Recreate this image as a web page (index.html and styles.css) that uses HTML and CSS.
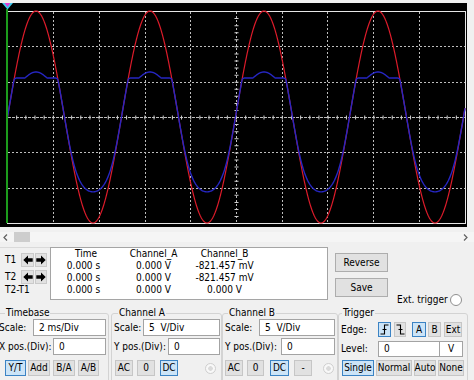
FILE: index.html
```html
<!DOCTYPE html>
<html>
<head>
<meta charset="utf-8">
<link rel="stylesheet" href="styles.css">
</head>
<body>
<div class="app">
  <svg class="scope" width="474" height="227" viewBox="0 0 474 227">
    <rect x="0" y="3" width="467" height="224" fill="#000"/>
    <g stroke="#bdbdbd" stroke-width="1" stroke-dasharray="2 2" fill="none">
      <line x1="53.5" y1="12" x2="53.5" y2="223"/>
      <line x1="99.5" y1="12" x2="99.5" y2="223"/>
      <line x1="145.5" y1="12" x2="145.5" y2="223"/>
      <line x1="190.5" y1="12" x2="190.5" y2="223"/>
      <line x1="282.5" y1="12" x2="282.5" y2="223"/>
      <line x1="327.5" y1="12" x2="327.5" y2="223"/>
      <line x1="373.5" y1="12" x2="373.5" y2="223"/>
      <line x1="419.5" y1="12" x2="419.5" y2="223"/>
      <line x1="8" y1="46.5" x2="465" y2="46.5"/>
      <line x1="8" y1="82.5" x2="465" y2="82.5"/>
      <line x1="8" y1="152.5" x2="465" y2="152.5"/>
      <line x1="8" y1="188.5" x2="465" y2="188.5"/>
      <line x1="236.5" y1="12" x2="236.5" y2="223"/>
      <line x1="8" y1="117.5" x2="465" y2="117.5" stroke-dasharray="3 1"/>
    </g>
    <g stroke="#cfcfcf" stroke-width="1" fill="none">
      <line x1="7" y1="117.5" x2="465" y2="117.5" stroke-width="4" stroke-dasharray="1 8.16"/>
      <line x1="236.5" y1="11" x2="236.5" y2="223" stroke-width="4" stroke-dasharray="1 6.07"/>
    </g>
    <g stroke="#e6e6e6" stroke-width="1" fill="none">
      <line x1="7" y1="11.5" x2="466" y2="11.5"/>
      <line x1="7" y1="223.5" x2="466" y2="223.5"/>
      <line x1="465.5" y1="11" x2="465.5" y2="224"/>
    </g>
    <polyline id="red" fill="none" stroke="#dc1b2a" stroke-width="1.2" points=""/>
    <polyline id="blue" fill="none" stroke="#2626c2" stroke-width="1.4" points=""/>
    <rect x="6" y="9" width="2" height="214" fill="#1c9c1c"/>
    <polygon points="2,3 13,3 7.5,9.5" fill="#3ccbee"/>
    <polygon points="4.6,3 10.4,3 7.5,7" fill="#e040d8"/>
  </svg>

  <div class="hscroll">
    <div class="track">
      <svg class="chev" width="5" height="7" viewBox="0 0 5 7"><path d="M4 0.5 L1 3.5 L4 6.5" fill="none" stroke="#606060" stroke-width="1.2"/></svg>
      <div class="thumb"></div>
      <svg class="chev chev-r" width="5" height="7" viewBox="0 0 5 7"><path d="M1 0.5 L4 3.5 L1 6.5" fill="none" stroke="#606060" stroke-width="1.2"/></svg>
    </div>
  </div>

  <div class="readout">
    <div class="tpanel">
      <div class="trow">
        <span class="tlabel">T1</span>
        <div class="abtn"><svg width="10" height="10" viewBox="0 0 10 10"><path d="M0.3 5 L5 0.6 V3.3 H9.7 V6.7 H5 V9.4 Z" fill="#000"/></svg></div>
        <div class="abtn abtn2"><svg width="10" height="10" viewBox="0 0 10 10"><path d="M9.7 5 L5 0.6 V3.3 H0.3 V6.7 H5 V9.4 Z" fill="#000"/></svg></div>
      </div>
      <div class="trow">
        <span class="tlabel">T2</span>
        <div class="abtn"><svg width="10" height="10" viewBox="0 0 10 10"><path d="M0.3 5 L5 0.6 V3.3 H9.7 V6.7 H5 V9.4 Z" fill="#000"/></svg></div>
        <div class="abtn abtn2"><svg width="10" height="10" viewBox="0 0 10 10"><path d="M9.7 5 L5 0.6 V3.3 H0.3 V6.7 H5 V9.4 Z" fill="#000"/></svg></div>
      </div>
      <div class="t21">T2-T1</div>
    </div>
    <div class="table">
      <div class="tgrid">
        <span class="th-time">Time</span><span>Channel_A</span><span>Channel_B</span>
        <span>0.000 s</span><span>0.000 V</span><span>-821.457 mV</span>
        <span>0.000 s</span><span>0.000 V</span><span>-821.457 mV</span>
        <span>0.000 s</span><span>0.000 V</span><span>0.000 V</span>
      </div>
    </div>
    <div class="rbtns">
      <div class="pbtn">Reverse</div>
      <div class="pbtn">Save</div>
    </div>
    <div class="ext"><span>Ext. trigger</span><span class="radio"></span></div>
  </div>

  <div class="controls">
    <fieldset class="grp g-tb">
      <legend>Timebase</legend>
      <div class="frow"><span>Scale:</span><div class="inp w73">2 ms/Div</div></div>
      <div class="frow"><span>X pos.(Div):</span><div class="inp w53">0</div></div>
      <div class="brow">
        <div class="btn on tb1">Y/T</div>
        <div class="btn tb2">Add</div>
        <div class="btn tb3">B/A</div>
        <div class="btn tb4">A/B</div>
      </div>
    </fieldset>

    <fieldset class="grp g-ca">
      <legend>Channel A</legend>
      <div class="frow"><span>Scale:</span><div class="inp w77">5&nbsp; V/Div</div></div>
      <div class="frow"><span>Y pos.(Div):</span><div class="inp w52">0</div></div>
      <div class="brow">
        <div class="btn ca1">AC</div>
        <div class="btn ca2">0</div>
        <div class="btn on ca3">DC</div>
        <span class="dradio ca4"></span>
      </div>
    </fieldset>

    <fieldset class="grp g-cb">
      <legend>Channel B</legend>
      <div class="frow"><span>Scale:</span><div class="inp w76">5&nbsp; V/Div</div></div>
      <div class="frow"><span>Y pos.(Div):</span><div class="inp w54">0</div></div>
      <div class="brow">
        <div class="btn cb1">AC</div>
        <div class="btn cb2">0</div>
        <div class="btn on cb3">DC</div>
        <div class="btn cb4">-</div>
        <span class="dradio cb5"></span>
      </div>
    </fieldset>

    <fieldset class="grp g-tr">
      <legend>Trigger</legend>
      <div class="trg1">
        <span class="tlab">Edge:</span>
        <div class="btn on e1"><svg width="9" height="11" viewBox="0 0 9 11"><path d="M0.5 10 H4.5 V1 H8.5 M2.5 5.5 H6.5" fill="none" stroke="#000" stroke-width="1.1"/></svg></div>
        <div class="btn e2"><svg width="9" height="11" viewBox="0 0 9 11"><path d="M0.5 1 H4.5 V10 H8.5 M2.5 5.5 H6.5" fill="none" stroke="#000" stroke-width="1.1"/></svg></div>
        <div class="btn on e3">A</div>
        <div class="btn e4">B</div>
        <div class="btn e5">Ext</div>
      </div>
      <div class="trg2">
        <span class="tlab">Level:</span>
        <div class="inp w62">0</div>
        <div class="vbox">V</div>
      </div>
      <div class="trg3">
        <div class="btn on s1">Single</div>
        <div class="btn s2">Normal</div>
        <div class="btn s3">Auto</div>
        <div class="btn s4">None</div>
      </div>
    </fieldset>
  </div>
</div>
<script src="script.js"></script>
</body>
</html>
```

FILE: styles.css
```css
* { box-sizing: border-box; }
html, body { margin: 0; padding: 0; }
body {
  background: #f0f0f0;
  font-family: "DejaVu Sans Condensed", "DejaVu Sans", sans-serif;
  font-stretch: condensed;
  font-size: 10px;
  line-height: 12px;
  color: #000;
  width: 474px;
  height: 380px;
  overflow: hidden;
}
.app { width: 474px; height: 380px; overflow: hidden; }
.scope { display: block; }

/* horizontal scrollbar */
.hscroll { height: 20px; padding-top: 5px; }
.track {
  height: 10px;
  display: flex;
  align-items: center;
  padding-left: 3px;
  padding-right: 6px;
  background: #f5f5f5;
}
.thumb { width: 16px; height: 10px; margin-left: 6px; background: #cdcdcd; }
.chev { display: block; }
.chev-r { margin-left: auto; }

/* readout row */
.readout { display: flex; align-items: flex-start; height: 53px; }
.tpanel { width: 50px; height: 53px; border-top: 1px solid #dadada; padding-top: 5px; }
.trow { display: flex; align-items: center; height: 14px; }
.trow + .trow { margin-top: 3px; }
.tlabel { width: 21px; padding-left: 5px; }
.abtn {
  width: 13px; height: 14px;
  background: #e1e1e1; border: 1px solid #cacaca;
  display: flex; align-items: center; justify-content: center;
}
.abtn2 { width: 12px; margin-left: 1px; }
.t21 { padding-left: 5px; }
.table {
  width: 278px; height: 53px;
  background: #fff; border: 1px solid #a5a5a5;
}
.tgrid {
  display: grid;
  grid-template-columns: 65px 75px 67px;
  text-align: center;
  line-height: 12px;
}
.th-time { padding-left: 5px; }
.rbtns { margin-left: 7px; padding-top: 6px; display: flex; flex-direction: column; gap: 6px; }
.pbtn {
  width: 53px; height: 19px;
  background: #e1e1e1; border: 1px solid #adadad;
  display: flex; align-items: center; justify-content: center;
}
.ext { margin-left: 9px; align-self: flex-end; margin-bottom: -6px; display: flex; align-items: center; height: 12px; }
.radio { width: 12px; height: 12px; margin-left: 2px; border-radius: 50%; border: 1px solid #8f8f8f; background: #fff; }

/* control groups */
.controls { display: flex; align-items: flex-start; height: 80px; }
.grp {
  margin: 7px 0 0 0;
  padding: 0 2px 8px 2px;
  border: 1px solid #d3d3d3;
  border-radius: 3px;
  min-width: 0;
}
.grp legend { padding: 0 1px; line-height: 12px; font-size: 10px; }
.g-tb { width: 113px; margin-left: -4px; }
.g-tb legend { margin-left: 6px; }
.g-ca { width: 111px; margin-left: 2px; padding-right: 1px; }
.g-ca legend { margin-left: 4px; }
.g-cb { width: 116px; }
.g-cb legend { margin-left: 3px; }
.g-tr { width: 130px; padding-right: 3px; }
.g-tr legend { margin-left: 1px; }

.frow { display: flex; align-items: center; justify-content: space-between; height: 17px; white-space: nowrap; }
.frow + .frow { margin-top: 2px; }
.brow { display: flex; align-items: center; height: 16px; margin-top: 5px; }

.inp {
  height: 17px;
  background: #fff;
  border: 1px solid #a3a3a3;
  padding-left: 5px;
  display: flex; align-items: center;
  white-space: nowrap;
}
.w73 { width: 73px; }
.w53 { width: 53px; }
.w77 { width: 77px; }
.w52 { width: 52px; }
.w76 { width: 76px; }
.w54 { width: 54px; }

.btn {
  height: 16px;
  background: #e1e1e1;
  border: 1px solid #c6c6c6;
  display: flex; align-items: center; justify-content: center;
  white-space: nowrap;
}
.btn.on { background: #cce4f7; border-color: #3b83c4; }

.tb1 { width: 21px; margin-left: 6px; }
.tb2 { width: 22px; margin-left: 2px; }
.tb3 { width: 22px; margin-left: 3px; }
.tb4 { width: 21px; margin-left: 3px; }

.ca1 { width: 18px; margin-left: 1px; }
.ca2 { width: 18px; margin-left: 4px; }
.ca3 { width: 18px; margin-left: 5px; }
.ca4 { margin-left: 27px; }

.cb1 { width: 18px; }
.cb2 { width: 17px; margin-left: 4px; }
.cb3 { width: 19px; margin-left: 6px; }
.cb4 { width: 18px; margin-left: 5px; }
.cb5 { margin-left: 11px; }

.dradio {
  width: 11px; height: 11px;
  border-radius: 50%;
  border: 1px solid #cfcfcf;
  background: radial-gradient(circle, #dadada 0 2px, #f8f8f8 2.6px);
}

.trg1 { display: flex; align-items: center; height: 15px; margin-top: 3px; }
.trg2 { display: flex; align-items: center; height: 16px; margin-top: 4px; }
.trg3 { display: flex; align-items: center; height: 16px; margin-top: 3px; }
.tlab { width: 37px; }
.trg1 .btn { height: 15px; }
.e1 { width: 13px; }
.e2 { width: 12px; margin-left: 3px; }
.e3 { width: 14px; margin-left: 6px; }
.e4 { width: 13px; margin-left: 2px; }
.e5 { width: 18px; margin-left: 3px; }
.trg2 .inp { height: 16px; }
.w62 { width: 62px; }
.vbox {
  width: 24px; height: 16px; margin-left: -1px;
  background: #fff; border: 1px solid #a3a3a3;
  display: flex; align-items: center; justify-content: center;
}
.s1 { width: 32px; margin-left: 1px; }
.s2 { width: 36px; margin-left: 2px; }
.s3 { width: 22px; margin-left: 2px; }
.s4 { width: 26px; margin-left: 2px; }
```

FILE: script.js
```js
(function () {
  var red = [], blue = [];
  for (var x = 7; x <= 465.01; x += 0.5) {
    var v = 106 * Math.sin(2 * Math.PI * (x - 7.5) / 114);
    var b;
    if (v >= 0) {
      b = v < 33 ? v : 33 + 6 * Math.tanh((v - 33) / 6);
      if (v > 86) b += 6 * Math.pow((v - 86) / 20, 1.2);
    } else {
      b = -91 * Math.tanh(-v / 91);
    }
    red.push(x.toFixed(1) + ',' + (117 - v).toFixed(2));
    blue.push(x.toFixed(1) + ',' + (117 - b).toFixed(2));
  }
  document.getElementById('red').setAttribute('points', red.join(' '));
  document.getElementById('blue').setAttribute('points', blue.join(' '));
})();
```
